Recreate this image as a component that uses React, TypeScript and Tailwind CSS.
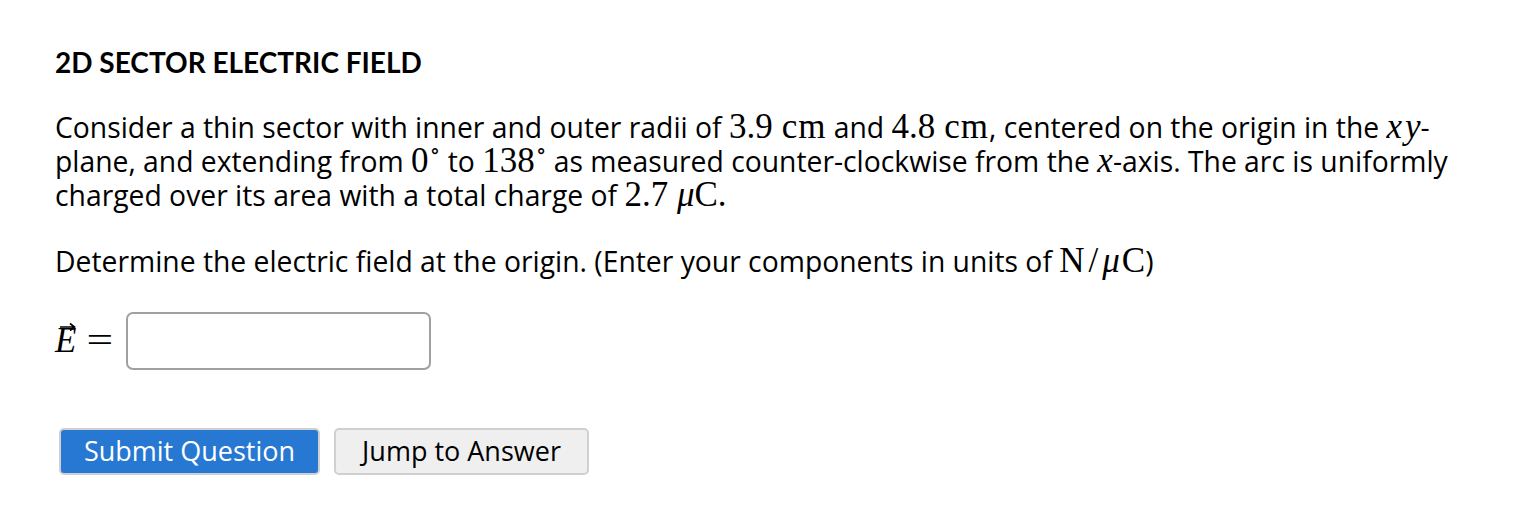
import React from "react";

const serif = { fontFamily: '"Liberation Serif", "DejaVu Serif", serif' };

const M: React.FC<{ children: React.ReactNode; className?: string }> = ({ children, className }) => (
  <span className={"text-[35px] leading-[0] " + (className ?? "")} style={serif}>
    {children}
  </span>
);

const I: React.FC<{ children: React.ReactNode }> = ({ children }) => <span className="italic">{children}</span>;

const Deg = () => <span className="text-[22px] relative -top-[14px] ml-[1px]">∘</span>;

const Cm = () => <span className="ml-[9px] tracking-[1px]">cm</span>;

export default function App() {
  return (
    <div className="min-h-[518px] bg-white text-black pl-[55px] pt-[45px]" style={{ fontFamily: '"Open Sans", "Noto Sans", sans-serif' }}>
      <h1 className="text-[28px] leading-[34px] font-bold" style={{ fontFamily: 'Lato, sans-serif' }}>2D SECTOR ELECTRIC FIELD</h1>
      <p className="mt-[31px] text-[28.3px] leading-[34px] whitespace-nowrap">
        Consider a thin sector with inner and outer radii of <M>3.9<Cm /></M> and <M>4.8<Cm /></M>, centered on the origin in the <M><I>x<span className="ml-[3px]">y</span></I></M>-
        <br />
        plane, and extending from <M>0<Deg /></M> to <M>138<Deg /></M> as measured counter-clockwise from the <M><I>x</I></M>-axis. The arc is uniformly
        <br />
        charged over its area with a total charge of <M>2.7 <I>μ</I>C.</M>
      </p>
      <p className="mt-[32px] text-[28.3px] leading-[34px] whitespace-nowrap">
        Determine the electric field at the origin. (Enter your components in units of <M>N<span className="mx-[4px]">/</span><I>μ</I><span className="ml-[2px]">C</span></M>)
      </p>
      <div className="mt-[34px] flex items-center">
        <span className="relative inline-block text-[35px] leading-[40px] w-[22px]" style={serif}>
          <I>E</I>
          <svg className="absolute left-[4px] top-[1px]" width="17" height="10" viewBox="0 0 17 10">
            <path d="M1 5 H15 M11 1.5 L15.5 5 L11 8.5" stroke="black" strokeWidth="1.7" fill="none" />
          </svg>
        </span>
        <span className="ml-[13px] inline-block scale-x-[1.35] text-[35px] leading-[40px]" style={serif}>=</span>
        <div className="ml-[16px] w-[305px] h-[58px] border-2 border-[#a0a0a0] rounded-[7px] bg-white" />
      </div>
      <div className="mt-[58px] flex gap-[14px] ml-[4px]">
        <button className="h-[47px] w-[261px] rounded-[5px] border-2 border-[#d0d0d0] bg-[#2778d2] text-white text-[27px]">
          Submit Question
        </button>
        <button className="h-[47px] w-[255px] rounded-[5px] border-2 border-[#d0d0d0] bg-[#efefef] text-black text-[27px]">
          Jump to Answer
        </button>
      </div>
    </div>
  );
}
